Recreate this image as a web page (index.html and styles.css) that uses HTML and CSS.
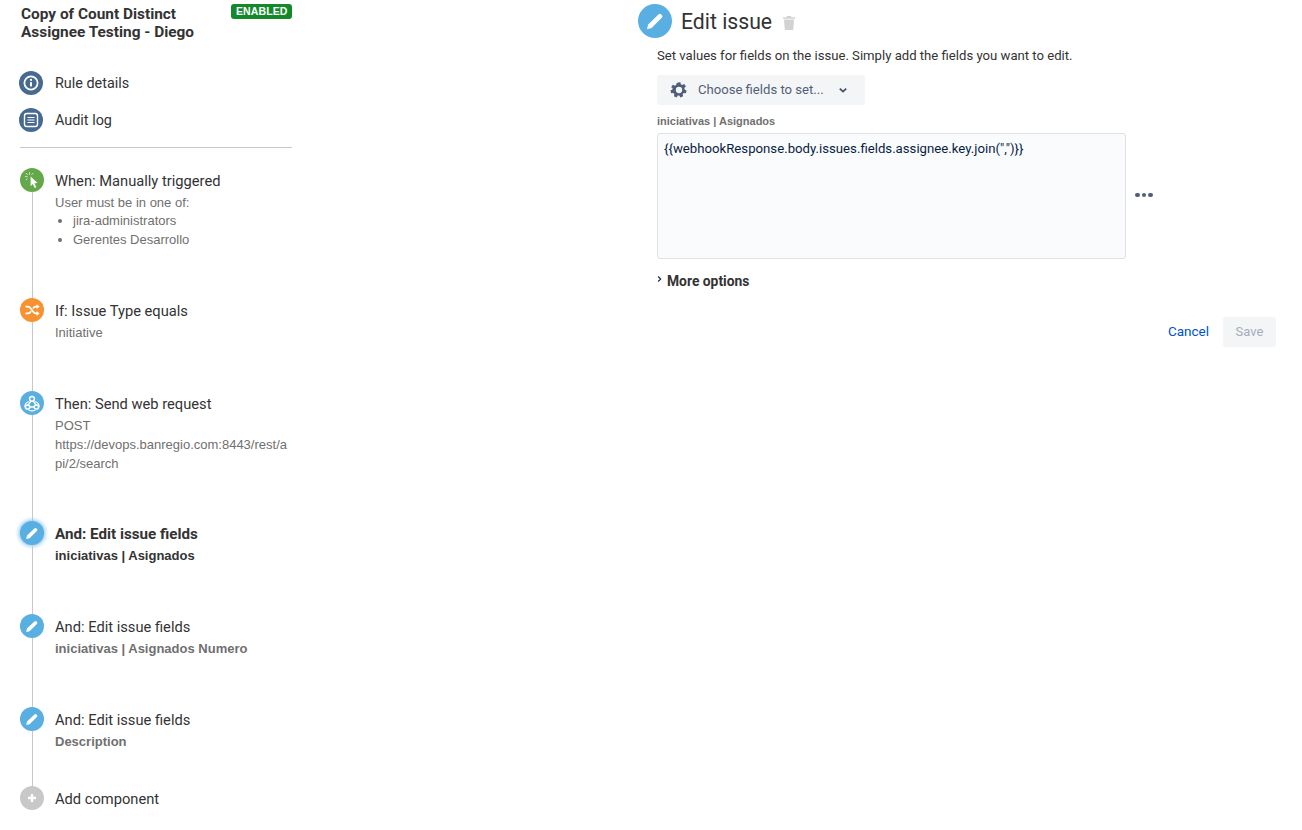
FILE: index.html
```html
<!DOCTYPE html>
<html lang="en">
<head>
<meta charset="utf-8">
<title>Edit issue</title>
<link rel="stylesheet" href="styles.css">
</head>
<body>
<div class="page">
  <aside class="sidebar">
    <header class="rule-head">
      <h1 class="rule-title">Copy of Count Distinct Assignee Testing - Diego</h1>
      <span class="lozenge">ENABLED</span>
    </header>
    <nav class="rule-nav">
      <a class="nav-item">
        <span class="dot dot-nav"><svg viewBox="0 0 24 24" class="ico"><circle cx="12" cy="12" r="6.6" fill="none" stroke="#fff" stroke-width="1.8"/><rect x="11" y="11" width="2" height="4.4" rx=".6" fill="#fff"/><circle cx="12" cy="8.9" r="1.1" fill="#fff"/></svg></span>
        <span>Rule details</span>
      </a>
      <a class="nav-item">
        <span class="dot dot-nav"><svg viewBox="0 0 24 24" class="ico"><rect x="5.5" y="5.5" width="13" height="13" rx="2.2" fill="none" stroke="#fff" stroke-width="1.4"/><path d="M8.5 9.5h7M8.5 12h7M8.5 14.5h7" stroke="#fff" stroke-width="1.2"/></svg></span>
        <span>Audit log</span>
      </a>
    </nav>
    <hr class="divider">
    <ol class="steps">
      <li class="step step-tall">
        <div class="rail"><span class="dot dot-green"><svg viewBox="0 0 24 24" class="ico"><path d="M10.6 8.6l7 6.4-3.1.3 1.9 4-1.7.8-1.9-4.1-2.2 2.2z" fill="#fff"/><path d="M9.6 4.2v2.6M5 8.6h2.6M5.9 5l1.8 1.8M13.3 5l-1.7 1.8M5.9 12.2l1.7-1.6" stroke="#fff" stroke-width=".9" opacity=".8"/></svg></span><span class="rail-line"></span></div>
        <div class="step-body">
          <div class="step-title">When: Manually triggered</div>
          <div class="step-sub">User must be in one of:</div>
          <ul class="step-list"><li>jira-administrators</li><li>Gerentes Desarrollo</li></ul>
        </div>
      </li>
      <li class="step">
        <div class="rail"><span class="dot dot-orange"><svg viewBox="0 0 24 24" class="ico"><path d="M5.5 8.6h2.6c3.2 0 4.4 6.8 7.6 6.8h2M5.5 15.4h2.6c1.3 0 2.2-1 3-2.2M13 10.4c.7-1 1.5-1.8 2.7-1.8h2" fill="none" stroke="#fff" stroke-width="1.7"/><path d="M16.6 6.2l3 2.4-3 2.4zM16.6 13l3 2.4-3 2.4z" fill="#fff"/></svg></span><span class="rail-line"></span></div>
        <div class="step-body">
          <div class="step-title">If: Issue Type equals</div>
          <div class="step-sub">Initiative</div>
        </div>
      </li>
      <li class="step step-tall">
        <div class="rail"><span class="dot dot-blue"><svg viewBox="0 0 24 24" class="ico"><g fill="none" stroke="#fff" stroke-linecap="round"><circle cx="12" cy="7.8" r="2.4" stroke-width="1.5"/><circle cx="7.6" cy="16" r="2.1" stroke-width="1.5"/><circle cx="16.4" cy="16" r="2.1" stroke-width="1.5"/><path d="M10.8 10.2L8 14.2M13.4 9.8l2.6 4.4M9.8 16h4.6" stroke-width="1.4"/><path d="M8.4 10.8c-2.4 1-3.6 2.8-3.6 5M15.6 10.8c2.4 1 3.6 2.8 3.6 5M9 19.2c2 .9 4 .9 6 0" stroke-width="1.1"/></g></svg></span><span class="rail-line"></span></div>
        <div class="step-body">
          <div class="step-title">Then: Send web request</div>
          <div class="step-sub">POST</div>
          <div class="step-sub step-url">https://devops.banregio.com:8443/rest/api/2/search</div>
        </div>
      </li>
      <li class="step step-active">
        <div class="rail"><span class="dot dot-blue dot-glow"><svg viewBox="0 0 24 24" class="ico"><path d="M7 14.6l7.4-7.2a1.5 1.5 0 0 1 2.1 0l.4.4a1.5 1.5 0 0 1 0 2.1l-7.3 7.3-3.4.9z" fill="#fff"/></svg></span><span class="rail-line"></span></div>
        <div class="step-body">
          <div class="step-title">And: Edit issue fields</div>
          <div class="step-sub step-strong">iniciativas | Asignados</div>
        </div>
      </li>
      <li class="step">
        <div class="rail"><span class="dot dot-blue"><svg viewBox="0 0 24 24" class="ico"><path d="M7 14.6l7.4-7.2a1.5 1.5 0 0 1 2.1 0l.4.4a1.5 1.5 0 0 1 0 2.1l-7.3 7.3-3.4.9z" fill="#fff"/></svg></span><span class="rail-line"></span></div>
        <div class="step-body">
          <div class="step-title">And: Edit issue fields</div>
          <div class="step-sub step-bold">iniciativas | Asignados Numero</div>
        </div>
      </li>
      <li class="step step-short">
        <div class="rail"><span class="dot dot-blue"><svg viewBox="0 0 24 24" class="ico"><path d="M7 14.6l7.4-7.2a1.5 1.5 0 0 1 2.1 0l.4.4a1.5 1.5 0 0 1 0 2.1l-7.3 7.3-3.4.9z" fill="#fff"/></svg></span><span class="rail-line"></span></div>
        <div class="step-body">
          <div class="step-title">And: Edit issue fields</div>
          <div class="step-sub step-bold">Description</div>
        </div>
      </li>
      <li class="step step-last">
        <div class="rail"><span class="dot dot-grey"><svg viewBox="0 0 24 24" class="ico"><path d="M12 8v8M8 12h8" stroke="#fff" stroke-width="2.4"/></svg></span></div>
        <div class="step-body">
          <div class="step-title">Add component</div>
        </div>
      </li>
    </ol>
  </aside>

  <main class="editor">
    <div class="editor-head">
      <span class="head-icon"><svg viewBox="0 0 34 34"><path d="M10.2 20.4l10.2-10a2 2 0 0 1 2.8 0l.6.6a2 2 0 0 1 0 2.8l-10.2 10.2-4.7 1.2z" fill="#fff"/></svg></span>
      <h2 class="editor-title">Edit issue</h2>
      <svg class="trash" viewBox="0 0 12 14"><path d="M4 0h4l.6 1.2H12v1.6H0V1.2h3.4zM1 3.6h10L10.2 14H1.8z" fill="#d2d2d2"/></svg>
    </div>
    <div class="editor-body">
      <p class="editor-desc">Set values for fields on the issue. Simply add the fields you want to edit.</p>
      <button class="choose-btn" type="button">
        <svg class="gear" viewBox="0 0 24 24"><path fill="#505f79" d="M13.6 2.5l.5 2.6c.6.2 1.2.4 1.7.8l2.4-1.1 2.1 2.8-1.9 1.9c.2.6.3 1.2.3 1.8l2.4 1.2-.9 3.4-2.6-.3c-.3.5-.8 1-1.2 1.4l.6 2.6-3.3 1.3-1.4-2.3h-1.8l-1.4 2.3-3.2-1.3.6-2.6c-.5-.4-.9-.9-1.3-1.4l-2.6.3-.9-3.4 2.4-1.2c0-.6.1-1.2.3-1.8L2.5 8.6l2.1-2.8L7 6.9c.5-.4 1.1-.6 1.7-.8l.5-2.6zM12 8.2a3.8 3.8 0 1 0 0 7.6 3.8 3.8 0 0 0 0-7.6z"/></svg>
        <span class="choose-label">Choose fields to set...</span>
        <svg class="chev" viewBox="0 0 10 10"><path d="M1.8 3.6L5 6.6l3.2-3" fill="none" stroke="#42526e" stroke-width="1.8"/></svg>
      </button>
      <label class="field-label">iniciativas | Asignados</label>
      <div class="field-row">
        <div class="field-input">{{webhookResponse.body.issues.fields.assignee.key.join(",")}}</div>
        <span class="more-dots"><i></i><i></i><i></i></span>
      </div>
      <div class="more-options">
        <svg class="more-chev" viewBox="0 0 6 8"><path d="M1.4 1L4.4 4 1.4 7" fill="none" stroke="#172b4d" stroke-width="1.4"/></svg>
        <span>More options</span>
      </div>
      <div class="actions">
        <a class="cancel">Cancel</a>
        <button class="save" type="button">Save</button>
      </div>
    </div>
  </main>
</div>
</body>
</html>
```
FILE: styles.css
```css
* { box-sizing: border-box; }
html, body { margin: 0; padding: 0; background: #fff; }
body { font-family: Roboto, "Liberation Sans", sans-serif; color: #333; height: 830px; overflow: hidden; }
.page { display: flex; align-items: flex-start; padding: 0 26px 0 20px; }

.sidebar { width: 272px; flex: none; }
.rule-head { display: flex; justify-content: space-between; align-items: flex-start; padding-top: 4px; height: 71px; }
.rule-title { margin: 1px 0 0 1px; width: 190px; font-size: 15.4px; line-height: 18px; font-weight: 700; color: #333; }
.lozenge { background: #14892c; color: #fff; font: 700 10.5px/14px "Liberation Sans", sans-serif; padding: 0 5px; width: 61px; text-align: center; height: 15px; border-radius: 3px; letter-spacing: .1px; }

.rule-nav { display: flex; flex-direction: column; gap: 13px; }
.nav-item { display: flex; align-items: center; gap: 12px; font-size: 14.4px; height: 24px; color: #333; }
.dot { width: 24px; height: 24px; border-radius: 50%; flex: none; display: block; }
.ico { width: 24px; height: 24px; display: block; }
.dot-nav { background: #476a90; margin-left: -1px; }
.divider { border: 0; border-top: 1px solid #c8c8c8; margin: 15px 0 20px; }

.steps { list-style: none; margin: 0; padding: 0; }
.step { display: flex; gap: 11px; min-height: 93px; }
.step-tall { min-height: 130px; }
.step-short { min-height: 79px; }
.step-last { min-height: 24px; }
.rail { width: 24px; flex: none; display: flex; flex-direction: column; align-items: center; }
.rail-line { flex: 1; width: 1px; background: #c8c8c8; }
.dot-green { background: #64a84a; }
.dot-orange { background: #f79232; }
.dot-blue { background: #59afe1; }
.dot-grey { background: #c8c8c8; }
.dot-glow { box-shadow: 0 0 4px 1px #7fbfe8; }
.step-body { flex: 1; min-width: 0; padding-bottom: 48px; }
.step-short .step-body { padding-bottom: 30px; }
.step-last .step-body { padding-bottom: 0; }
.step-title { font-size: 14.7px; line-height: 24px; color: #333; padding-top: 1px; height: 25px; }
.step-sub { font: 13px/19px "Liberation Sans", sans-serif; color: #707070; }
.step-url { word-break: break-all; }
.step-strong { font-weight: 700; color: #333; }
.step-bold { font-weight: 700; }
.step-active .step-title { font-weight: 700; font-size: 15.2px; }
.step-list { margin: 0 0 0 -1px; padding: 0 0 0 19px; font: 13px/18.5px "Liberation Sans", sans-serif; color: #707070; list-style: disc; }

.editor { flex: 1; padding-left: 346px; min-width: 0; }
.editor-head { display: flex; align-items: center; height: 41px; padding-top: 1px; }
.head-icon { width: 34px; height: 34px; border-radius: 50%; background: #59afe1; flex: none; }
.head-icon svg { display: block; width: 34px; height: 34px; }
.editor-title { margin: 2px 0 0 9px; font-size: 21.2px; font-weight: 400; line-height: 32px; color: #333; }
.trash { width: 12px; height: 14px; margin: 3px 0 0 11px; }
.editor-body { padding-left: 19px; }
.editor-desc { margin: 5px 0 0; font-size: 13.13px; line-height: 19px; color: #333; }
.choose-btn { display: flex; align-items: center; width: 208px; height: 30px; margin-top: 10px; padding: 0 0 2px 12px; border: 0; border-radius: 3px; background: #f4f5f7; font: 13.1px Roboto, sans-serif; color: #505f79; }
.gear { width: 20px; height: 20px; flex: none; margin-top: 2px; }
.choose-label { margin-left: 9px; }
.chev { width: 10px; height: 10px; margin: 2px 0 0 14px; }
.field-label { display: block; margin-top: 9px; font: 700 11px/14px "Liberation Sans", sans-serif; color: #707070; }
.field-row { display: flex; align-items: center; margin-top: 5px; }
.field-input { width: 469px; height: 126px; padding: 6px 6px; border: 1px solid #dfe1e6; border-radius: 3px; background: #fafbfc; font-size: 13.2px; line-height: 17px; color: #091e42; }
.more-dots { display: flex; gap: 2px; margin: 0 0 2px 9px; }
.more-dots i { width: 4.5px; height: 4.5px; border-radius: 50%; background: #505f79; display: block; }
.more-options { display: flex; align-items: center; gap: 5px; margin-top: 13px; font-size: 13.85px; line-height: 18px; font-weight: 700; color: #333; }
.more-chev { width: 5px; height: 8px; margin: 0 0 5px 0; }
.actions { display: flex; justify-content: flex-end; align-items: center; gap: 14px; margin-top: 27px; }
.cancel { color: #0052cc; font-size: 13.5px; padding-bottom: 2px; }
.save { width: 53px; height: 30px; border: 0; border-radius: 3px; padding: 0 0 2px; background: #f4f5f7; color: #a5adba; font: 13px Roboto, sans-serif; }
```
